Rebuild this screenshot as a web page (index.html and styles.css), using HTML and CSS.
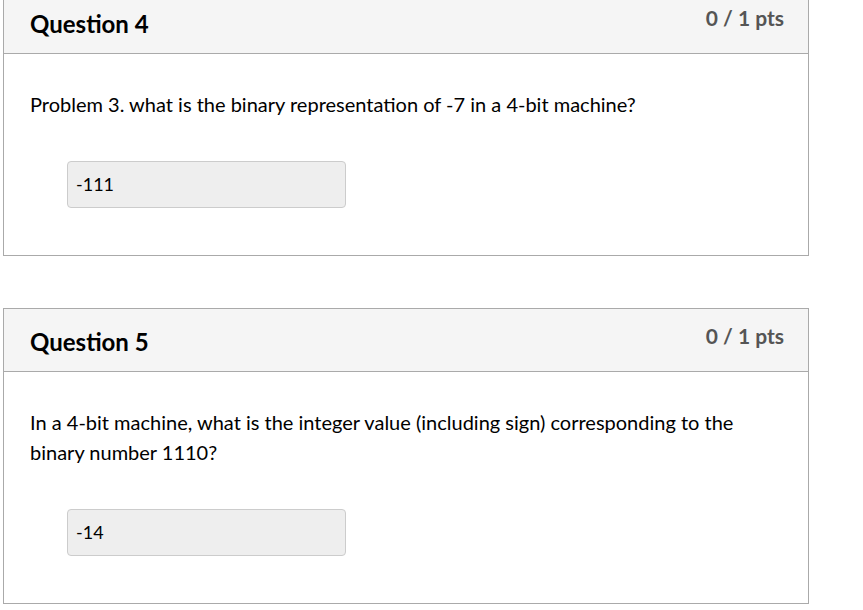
FILE: index.html
```html
<!DOCTYPE html>
<html>
<head>
<meta charset="utf-8">
<link rel="stylesheet" href="styles.css">
</head>
<body>
<div class="page">
  <div class="card first">
    <div class="card-header">
      <h2 class="title">Question 4</h2>
      <div class="pts">0 / 1 pts</div>
    </div>
    <div class="card-body">
      <p class="question">Problem 3. what is the binary representation of -7 in a 4-bit machine?</p>
      <div class="answer">-111</div>
    </div>
  </div>
  <div class="card">
    <div class="card-header">
      <h2 class="title">Question 5</h2>
      <div class="pts">0 / 1 pts</div>
    </div>
    <div class="card-body">
      <p class="question">In a 4-bit machine, what is the integer value (including sign) corresponding to the binary number 1110?</p>
      <div class="answer">-14</div>
    </div>
  </div>
</div>
</body>
</html>
```

FILE: styles.css
```css
html, body {
  margin: 0;
  padding: 0;
  background: #ffffff;
}
body {
  font-family: Lato, "Noto Sans", sans-serif;
  color: #2d3b45;
}
.page {
  padding-left: 3px;
  display: flex;
  flex-direction: column;
  gap: 52px;
}
.card {
  width: 806px;
  box-sizing: border-box;
  border: 1px solid #aaaaaa;
}
.card.first {
  margin-top: -10px;
}
.card-header {
  height: 63px;
  box-sizing: border-box;
  background: #f5f5f5;
  border-bottom: 1px solid #aaaaaa;
  display: flex;
  justify-content: space-between;
  align-items: flex-start;
  padding: 0 24px 0 26px;
}
.title {
  margin: 0;
  font-size: 24px;
  font-weight: 700;
  line-height: 28px;
  padding-top: 19px;
  color: #000000;
}
.pts {
  font-size: 21px;
  font-weight: 700;
  color: #555555;
  line-height: 26px;
  padding-top: 14px;
}
.card-body {
  padding: 35px 26px 47px 26px;
}
.question {
  margin: 0 0 42px 0;
  font-size: 20px;
  line-height: 30px;
  color: #000000;
}
.answer {
  margin-left: 37px;
  width: 279px;
  height: 47px;
  box-sizing: border-box;
  background: #eeeeee;
  border: 1px solid #cccccc;
  border-radius: 4px;
  padding: 0 8px;
  font-size: 18px;
  line-height: 45px;
  color: #000000;
}
```
